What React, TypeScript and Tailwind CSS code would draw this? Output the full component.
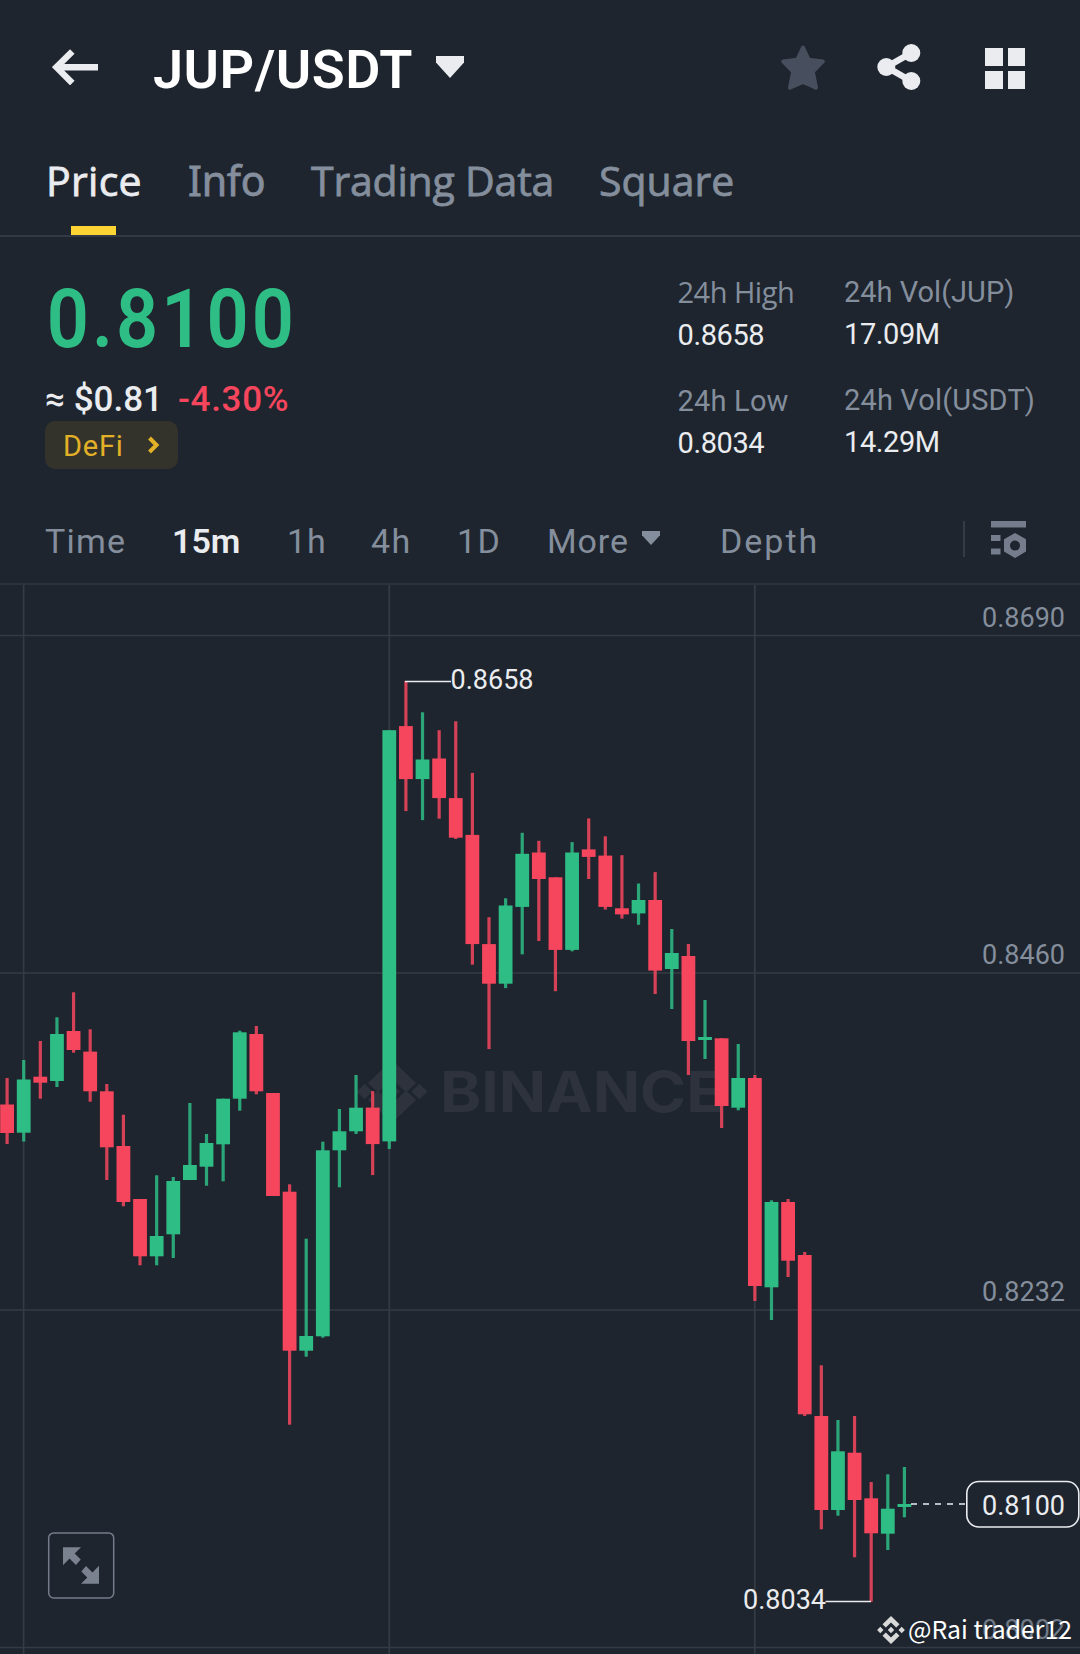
import React from "react";

const UP = "#2ebd85";
const DOWN = "#f6465d";

// Chart canvas: x spans 0-1080, y spans 585-1654.
const STEP = 16.617;
const FIRST = 7.1;

// [rising, high, bodyTop, bodyBottom, low]
const candles: [number, number, number, number, number][] = [
  [0, 1078, 1104.5, 1133, 1144],
  [1, 1060, 1079.5, 1132.7, 1141.5],
  [0, 1041, 1076.7, 1082.7, 1098.7],
  [1, 1017.3, 1034, 1081, 1087],
  [0, 992.3, 1031, 1050, 1052.7],
  [0, 1029.3, 1051.6, 1091.3, 1101.7],
  [0, 1084, 1091.3, 1147.3, 1180],
  [0, 1114.7, 1146, 1202, 1206.3],
  [0, 1199, 1199, 1256.3, 1265.3],
  [1, 1175.3, 1236, 1256.3, 1265.3],
  [1, 1177, 1181, 1234.3, 1258],
  [1, 1103, 1165, 1180, 1180],
  [1, 1134, 1143, 1166.7, 1185.7],
  [1, 1098.7, 1098.7, 1144.3, 1181.3],
  [1, 1030.7, 1032.3, 1098.7, 1110.7],
  [0, 1026, 1034, 1091.3, 1094.3],
  [0, 1093, 1093, 1196, 1196],
  [0, 1184.3, 1191.7, 1350.7, 1424.7],
  [1, 1238.7, 1336, 1350.7, 1356.7],
  [1, 1141.7, 1150.3, 1336.3, 1337.7],
  [1, 1109, 1131.3, 1150.3, 1187.3],
  [1, 1075, 1107.7, 1131.3, 1134],
  [0, 1091.1, 1107.6, 1144.1, 1175.1],
  [1, 730.2, 730.2, 1141.4, 1149],
  [0, 681, 726.1, 779.1, 811.1],
  [1, 712.3, 759.5, 779.1, 820.1],
  [0, 730.2, 758.5, 798.1, 818.7],
  [0, 721.3, 798.1, 837.7, 839],
  [0, 772.9, 834.9, 944.1, 964.7],
  [0, 917.2, 944.1, 983.7, 1049.1],
  [1, 898.3, 905.5, 983.7, 988.1],
  [1, 832.8, 853.8, 906.9, 954.4],
  [0, 840.8, 852.5, 879, 941],
  [0, 877.3, 877.3, 949.9, 991.2],
  [1, 842.1, 852.5, 949.9, 951.3],
  [0, 818.4, 849.4, 856.9, 879],
  [0, 836.3, 855.6, 906.9, 909.6],
  [0, 855.2, 908.3, 914.4, 918.6],
  [1, 883.5, 900, 913.4, 924.8],
  [0, 872.1, 900, 970.6, 994],
  [1, 929, 953, 969, 1009],
  [0, 944, 956, 1041, 1075],
  [1, 1000, 1037, 1040, 1059],
  [0, 1038.3, 1038.3, 1106, 1128],
  [1, 1044, 1078, 1107.7, 1110.3],
  [0, 1075, 1078, 1286, 1301],
  [1, 1200.3, 1202, 1287.3, 1320],
  [0, 1199, 1202, 1260.7, 1277],
  [0, 1252, 1255, 1414.3, 1416],
  [0, 1365.3, 1416, 1510, 1529.3],
  [1, 1420, 1451.3, 1510, 1515.7],
  [0, 1416, 1452.7, 1500, 1557.3],
  [0, 1482, 1498.3, 1533.3, 1601.7],
  [1, 1474.3, 1508.7, 1533.7, 1550],
  [1, 1467, 1504, 1507, 1517.3],
];

const gridLines = [
  { y: 635.5, label: "0.8690" },
  { y: 973, label: "0.8460" },
  { y: 1310, label: "0.8232" },
  { y: 1647.5, label: "0.8002" },
];

function Caret({ className }: { className: string }) {
  return (
    <svg viewBox="0 0 28 22" className={className} preserveAspectRatio="none" fill="currentColor">
      <path d="M0 0h28v6.5L14 22 0 6.5z" />
    </svg>
  );
}

function Header() {
  return (
    <header className="flex h-[134px] items-center pl-[52px] pr-[55px]">
      <svg viewBox="0 0 46 36" className="h-9 w-[46px] shrink-0 text-[#eaecef]" fill="none" stroke="currentColor" strokeWidth="6.4">
        <path d="M46 18.3H6M20.3 2.4L4.4 18.2l15.9 15.9" />
      </svg>
      <h1 className="ml-[55px] w-[283px] whitespace-nowrap pt-[6px] text-[54px] font-semibold leading-none tracking-[0.5px] text-white">
        JUP/USDT
      </h1>
      <Caret className="h-[22px] w-7 shrink-0 text-[#eaecef]" />
      <div className="ml-auto flex items-center">
        <svg viewBox="0 0 46 48" className="h-12 w-[46px] text-[#474f5e]" fill="currentColor" stroke="currentColor" strokeWidth="4" strokeLinejoin="round">
          <path d="M23 4.500l5.600 12.200 14.200 1.700-10 10.200 3.200 16.100L23 39 10 44.700 13.200 28.600 3.200 18.400 17.400 16.700z" />
        </svg>
        <svg viewBox="0 0 44 48" className="ml-[51px] h-12 w-11 text-[#eaecef]" fill="currentColor">
          <path d="M34 10L9.5 24 34 38" fill="none" stroke="currentColor" strokeWidth="6.5" />
          <circle cx="34.3" cy="10" r="9" />
          <circle cx="9.3" cy="24" r="9" />
          <circle cx="34.3" cy="38" r="9" />
        </svg>
        <div className="ml-[64px] mt-[2px] grid h-[41px] w-10 grid-cols-2 gap-x-[5px] gap-y-[5px]">
          <span className="bg-[#eaecef]" />
          <span className="bg-[#eaecef]" />
          <span className="bg-[#eaecef]" />
          <span className="bg-[#eaecef]" />
        </div>
      </div>
    </header>
  );
}

function Tabs() {
  return (
    <nav className="flex h-[103px] border-b-2 border-[#323944] pl-[46px] pt-[21px] font-['Open_Sans',sans-serif] text-[41px] leading-[50px] text-[#848e9c] [-webkit-text-stroke:0.8px]">
      <div className="flex w-[142px] flex-col justify-between text-[#eaecef]">
        <span className="tracking-[0.3px]">Price</span>
        <span className="ml-[25px] h-[9px] w-[45px] bg-[#fcd535]" />
      </div>
      <span className="w-[123px] whitespace-nowrap font-['Noto_Sans',sans-serif] tracking-[-0.2px]">Info</span>
      <span className="w-[288px] whitespace-nowrap tracking-[-0.2px]">Trading Data</span>
      <span className="whitespace-nowrap">Square</span>
    </nav>
  );
}

function Stat({ label, value, labelClass }: { label: string; value: string; labelClass: string }) {
  return (
    <div className="whitespace-nowrap leading-9">
      <div className={labelClass}>{label}</div>
      <div className="mt-[6px] text-[29px] tracking-[-0.4px] text-[#eaecef]">{value}</div>
    </div>
  );
}

function Ticker() {
  return (
    <section className="flex h-[260px] pl-[45px]">
      <div className="w-[632.500px] pt-[42px]">
        <div className="origin-left scale-x-90 pl-[2px] text-[82px] font-semibold leading-[80px] tracking-[3.4px] text-[#2ebd85]">
          0.8100
        </div>
        <div className="mt-[21px] flex whitespace-nowrap text-[35px] font-medium leading-10">
          <span className="w-[133px] text-[#eaecef]">≈ $0.81</span>
          <span className="tracking-[0.700px] text-[#f6465d]">-4.30%</span>
        </div>
        <div className="mt-px flex h-12 w-[133px] items-center rounded-[10px] bg-[#34332b] pl-[18px] text-[29px] text-[#e3b127]">
          <span className="w-[85px] pt-[3px] tracking-[0.8px]">DeFi</span>
          <svg viewBox="0 0 12 18" className="h-[18px] w-3" fill="none" stroke="currentColor" strokeWidth="4">
            <path d="M1.5 2L8.5 9l-7 7" />
          </svg>
        </div>
      </div>
      <div className="flex w-[166.500px] flex-col gap-[30px] pt-[38px] text-[#848e9c]">
        <Stat label="24h High" value="0.8658" labelClass="-mt-px mb-[7px] font-['Open_Sans',sans-serif] text-[29px] tracking-[-0.5px]" />
        <Stat label="24h Low" value="0.8034" labelClass="text-[29px] tracking-[0.2px]" />
      </div>
      <div className="flex flex-col gap-[30px] pt-[37px] text-[#848e9c]">
        <Stat label="24h Vol(JUP)" value="17.09M" labelClass="text-[29px]" />
        <Stat label="24h Vol(USDT)" value="14.29M" labelClass="text-[29px] tracking-[0.150px]" />
      </div>
    </section>
  );
}

function Intervals() {
  return (
    <div className="flex h-[88px] items-center whitespace-nowrap border-b-2 border-[#2b323c] pl-[45px] pr-[54px] pt-px text-[34px] leading-10 text-[#848e9c]">
      <span className="w-[127px] tracking-[1.2px]">Time</span>
      <span className="w-[115px] font-semibold text-[#eaecef]">15m</span>
      <span className="w-[84px] tracking-[0.900px]">1h</span>
      <span className="w-[86px] tracking-[1.500px]">4h</span>
      <span className="w-[90px] tracking-[1.500px]">1D</span>
      <span className="w-[95px] tracking-[0.900px]">More</span>
      <Caret className="mb-[6px] h-[14px] w-[18px] shrink-0" />
      <span className="ml-[60px] tracking-[2px]">Depth</span>
      <div className="ml-auto flex items-center gap-[26px] pb-[3px]">
        <span className="h-9 w-[2px] bg-[#343b47]" />
        <svg viewBox="0 0 35 37" className="h-[37px] w-[35px]" fill="#757d8c">
          <path d="M0 0h35v6.500H0zM0 14h9.500v6H0zM0 27.500h9.500v6H0z" />
          <path fillRule="evenodd" d="M24 12l11 6.200v12.300L24 37l-11-6.500V18.200zM24 19.600a5 5 0 100 10 5 5 0 000-10z" />
        </svg>
      </div>
    </div>
  );
}

function Chart() {
  return (
    <svg viewBox="0 585 1080 1069" className="block h-[1069px] w-[1080px]" fontFamily="Roboto, sans-serif" fontSize="27">
      <g stroke="#343b45" strokeWidth="1.7">
        {gridLines.map((g) => (
          <line key={g.y} x1="0" x2="1080" y1={g.y} y2={g.y} />
        ))}
        {[23.6, 389.3, 754.8].map((x) => (
          <line key={x} x1={x} x2={x} y1="585" y2="1654" />
        ))}
      </g>

      <g fill="#2d323d">
        <path d="M392 1060l24 23-10 9.500-14-13.500-14 13.500-10-9.500z" />
        <path d="M392 1123l24-23-10-9.500-14 13.500-14-13.500-10 9.500z" />
        <path d="M419.500 1083.700l8 7.800-8 7.800-8-7.800zM364.500 1083.700l8 7.800-8 7.800-8-7.800zM392 1083.700l8 7.800-8 7.800-8-7.800z" />
        <text x="440" y="1112" fontFamily="Inter, sans-serif" fontSize="56" fontWeight="700" textLength="284" lengthAdjust="spacingAndGlyphs">
          BINANCE
        </text>
      </g>

      <g fill="#848e9c">
        {gridLines.map((g) => (
          <text key={g.label} x="982" y={g.y - 8.800} opacity={g.label === "0.8002" ? 0.8 : 1}>
            {g.label}
          </text>
        ))}
      </g>

      {candles.map(([up, high, top, bottom, low], i) => {
        const cx = FIRST + i * STEP;
        const color = up ? UP : DOWN;
        return (
          <g key={i} fill={color}>
            <rect x={cx - 1.6} y={high} width="3.2" height={low - high} opacity="0.85" />
            <rect x={cx - 6.9} y={top} width="13.800" height={bottom - top} />
          </g>
        );
      })}

      <g stroke="#eaecef" strokeWidth="1.600" fill="none">
        <path d="M405 681.500h46M825.500 1601.500H871" />
        <path d="M911 1504h55" strokeDasharray="6 6" />
        <rect x="966.800" y="1481.500" width="112" height="45.500" rx="12" fill="#1e252e" />
      </g>
      <g fill="#eaecef">
        <text x="450.500" y="688.500">0.8658</text>
        <text x="743" y="1609">0.8034</text>
        <text x="982" y="1514.500">0.8100</text>
      </g>

      <g>
        <rect x="48.700" y="1532.900" width="65" height="65" rx="5" fill="none" stroke="#747c8a" strokeWidth="1.500" />
        <path d="M63 1547.300h18l-6.300 6.300 6 6-4.700 5.400-6.500-6.500-6.500 6.700zM99 1583.700H81l6.300-6.300-6-6 4.700-5.400 6.500 6.500 6.500-6.700z" fill="#7a8290" />
      </g>

      <g fill="#d9d9da" transform="translate(891 1630)">
        <path d="M0-14l8.500 8.200-3.300 3.300L0-7.500l-5.200 5-3.300-3.300z" />
        <path d="M0 14l8.500-8.200-3.300-3.300L0 7.500l-5.200-5-3.300 3.300z" />
        <path d="M0-3.200L3.200 0 0 3.200-3.200 0zM10.700-3.200L13.900 0l-3.200 3.200L7.500 0zM-10.700-3.200L-7.500 0l-3.200 3.200L-13.900 0z" />
      </g>
      <text x="908" y="1639" fill="#ffffff" fontFamily="'Noto Sans CJK SC', sans-serif" fontSize="24.800">
        @Rai trader12
      </text>
    </svg>
  );
}

export default function App() {
  return (
    <main className="flex h-[1654px] w-[1080px] flex-col overflow-hidden bg-[#1e252e] font-['Roboto',sans-serif]">
      <Header />
      <Tabs />
      <Ticker />
      <Intervals />
      <Chart />
    </main>
  );
}
